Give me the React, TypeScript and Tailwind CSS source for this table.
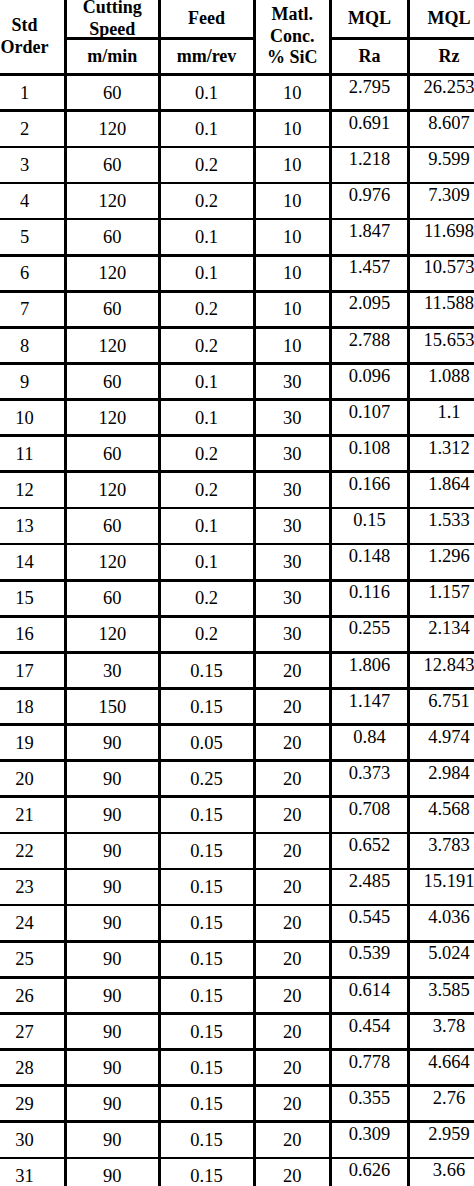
import React from "react";

const rows: [string, string, string, string, string, string][] = [
  ["1", "60", "0.1", "10", "2.795", "26.253"],
  ["2", "120", "0.1", "10", "0.691", "8.607"],
  ["3", "60", "0.2", "10", "1.218", "9.599"],
  ["4", "120", "0.2", "10", "0.976", "7.309"],
  ["5", "60", "0.1", "10", "1.847", "11.698"],
  ["6", "120", "0.1", "10", "1.457", "10.573"],
  ["7", "60", "0.2", "10", "2.095", "11.588"],
  ["8", "120", "0.2", "10", "2.788", "15.653"],
  ["9", "60", "0.1", "30", "0.096", "1.088"],
  ["10", "120", "0.1", "30", "0.107", "1.1"],
  ["11", "60", "0.2", "30", "0.108", "1.312"],
  ["12", "120", "0.2", "30", "0.166", "1.864"],
  ["13", "60", "0.1", "30", "0.15", "1.533"],
  ["14", "120", "0.1", "30", "0.148", "1.296"],
  ["15", "60", "0.2", "30", "0.116", "1.157"],
  ["16", "120", "0.2", "30", "0.255", "2.134"],
  ["17", "30", "0.15", "20", "1.806", "12.843"],
  ["18", "150", "0.15", "20", "1.147", "6.751"],
  ["19", "90", "0.05", "20", "0.84", "4.974"],
  ["20", "90", "0.25", "20", "0.373", "2.984"],
  ["21", "90", "0.15", "20", "0.708", "4.568"],
  ["22", "90", "0.15", "20", "0.652", "3.783"],
  ["23", "90", "0.15", "20", "2.485", "15.191"],
  ["24", "90", "0.15", "20", "0.545", "4.036"],
  ["25", "90", "0.15", "20", "0.539", "5.024"],
  ["26", "90", "0.15", "20", "0.614", "3.585"],
  ["27", "90", "0.15", "20", "0.454", "3.78"],
  ["28", "90", "0.15", "20", "0.778", "4.664"],
  ["29", "90", "0.15", "20", "0.355", "2.76"],
  ["30", "90", "0.15", "20", "0.309", "2.959"],
  ["31", "90", "0.15", "20", "0.626", "3.66"],
];

const head =
  "bg-white flex items-center justify-center text-center font-bold text-[18px] leading-[21.5px] whitespace-nowrap";
const cell =
  "bg-white flex items-center justify-center text-[18.5px] pt-[2px] whitespace-nowrap";
const cellHigh =
  "bg-white flex items-center justify-center text-[18.5px] pb-[10px] whitespace-nowrap";

export default function App() {
  return (
    <div className="w-[474px] h-[1186px] overflow-hidden bg-white font-['Liberation_Serif',serif] text-black">
      <div className="ml-[-15px] w-[504px] grid grid-cols-[79px_90.5px_92px_73.5px_75px_78px] grid-rows-[37.3px_33.3px_repeat(31,33.43px)] gap-x-[3px] gap-y-[2.7px] bg-black">
        <div className={`${head} row-span-2`}>
          <span>
            Std
            <br />
            Order
          </span>
        </div>
        <div className={head}>
          <span>
            Cutting
            <br />
            Speed
          </span>
        </div>
        <div className={head}>Feed</div>
        <div className={`${head} row-span-2`}>
          <span>
            Matl.
            <br />
            Conc.
            <br />% SiC
          </span>
        </div>
        <div className={head}>MQL</div>
        <div className={head}>MQL</div>
        <div className={head}>m/min</div>
        <div className={head}>mm/rev</div>
        <div className={head}>Ra</div>
        <div className={head}>Rz</div>
        {rows.map((r) => (
          <React.Fragment key={r[0]}>
            <div className={cell}>{r[0]}</div>
            <div className={cell}>{r[1]}</div>
            <div className={cell}>{r[2]}</div>
            <div className={cell}>{r[3]}</div>
            <div className={cellHigh}>{r[4]}</div>
            <div className={cellHigh}>{r[5]}</div>
          </React.Fragment>
        ))}
      </div>
    </div>
  );
}
